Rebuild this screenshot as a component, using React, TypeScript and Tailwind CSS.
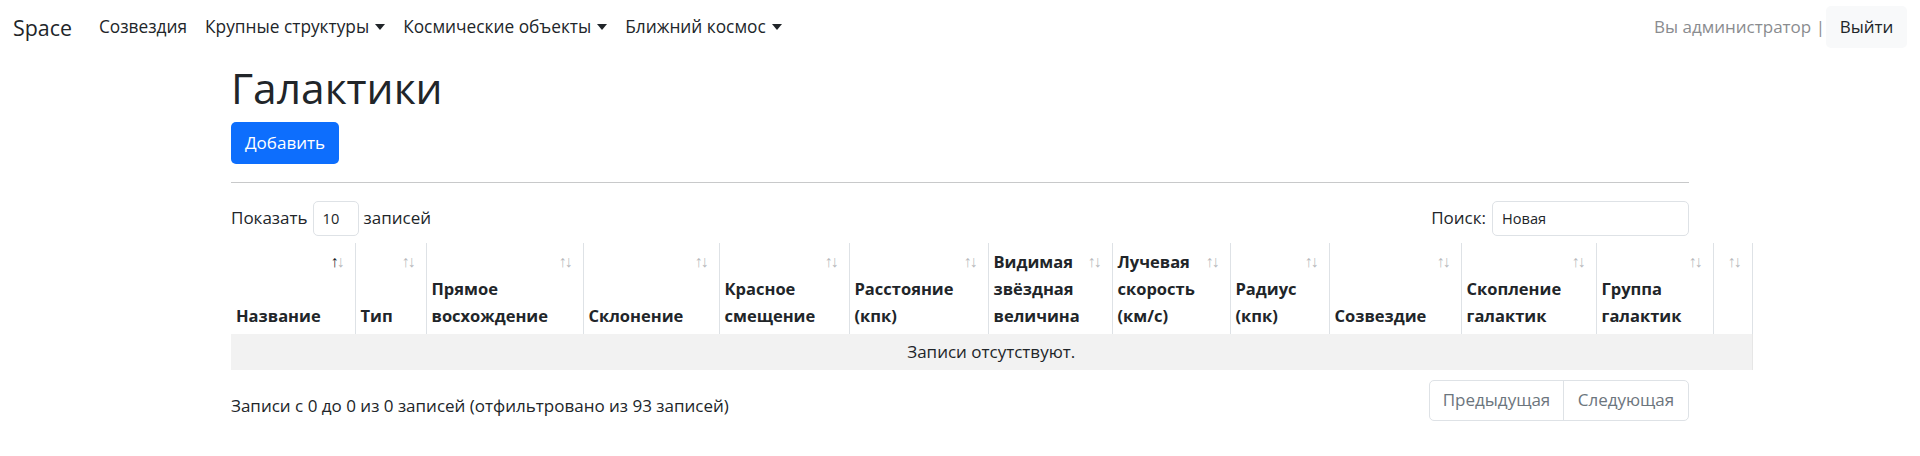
import React from "react";

const font = "font-['Open_Sans','Noto_Sans',sans-serif]";

type Col = { lines: string[]; cls: string; active?: boolean };

const cols: Col[] = [
  { lines: ["Название"], cls: "w-[124px]", active: true },
  { lines: ["Тип"], cls: "w-[71px]" },
  { lines: ["Прямое", "восхождение"], cls: "w-[157px]" },
  { lines: ["Склонение"], cls: "w-[136px]" },
  { lines: ["Красное", "смещение"], cls: "w-[130px]" },
  { lines: ["Расстояние", "(кпк)"], cls: "w-[139px]" },
  { lines: ["Видимая", "звёздная", "величина"], cls: "w-[124px]" },
  { lines: ["Лучевая", "скорость", "(км/с)"], cls: "w-[118px]" },
  { lines: ["Радиус", "(кпк)"], cls: "w-[99px]" },
  { lines: ["Созвездие"], cls: "w-[132px]" },
  { lines: ["Скопление", "галактик"], cls: "w-[135px]" },
  { lines: ["Группа", "галактик"], cls: "w-[117px]" },
  { lines: [], cls: "w-[39px]" },
];

function Caret() {
  return (
    <span className="ml-[6px] inline-block h-0 w-0 border-x-[5px] border-t-[6px] border-x-transparent border-t-[#212529] align-[3px]" />
  );
}

function SortIcon({ active }: { active?: boolean }) {
  return (
    <span className="absolute right-[10px] top-[7px] flex text-[16px] leading-[22px] font-normal">
      <span className={active ? "text-[#212529]" : "text-[#b8babd]"}>↑</span>
      <span className="-ml-[2px] text-[#b8babd]">↓</span>
    </span>
  );
}

export default function App() {
  return (
    <div className={`${font} min-h-screen bg-white text-[17px] leading-[26.4px] text-[#212529]`}>
      {/* navbar */}
      <nav className="flex h-[54px] items-center justify-between px-[13px]">
        <div className="flex items-center text-[17.3px]">
          <span className="mr-[18px] text-[21.4px] leading-[33px]">Space</span>
          <a className="px-[9px] py-[8px]">Созвездия</a>
          <a className="px-[9px] py-[8px]">
            Крупные структуры
            <Caret />
          </a>
          <a className="px-[9px] py-[8px]">
            Космические объекты
            <Caret />
          </a>
          <a className="px-[9px] py-[8px]">
            Ближний космос
            <Caret />
          </a>
        </div>
        <div className="flex items-center">
          <span className="text-[#8a8c8f]">Вы администратор |</span>
          <button className="ml-[1px] h-[42px] w-[81px] rounded-[5px] bg-[#f8f9fa] text-[#212529]">Выйти</button>
        </div>
      </nav>

      <main className="mx-auto w-[1458px]">
        <h1 className="mt-[8px] text-[42.5px] leading-[52px] font-medium">Галактики</h1>
        <button className="mt-[8px] h-[42px] w-[108px] rounded-[5px] bg-[#0d6efd] text-white">Добавить</button>
        <hr className="mt-[18px] border-t border-[#c8c9ca]" />

        {/* length + search */}
        <div className="mt-[18px] flex items-center justify-between">
          <div className="flex items-center">
            <span>Показать</span>
            <span className="mx-[5px] flex h-[35px] w-[46px] items-center rounded-[5px] border border-[#dee2e6] pl-[9px] text-[14.6px]">10</span>
            <span>записей</span>
          </div>
          <div className="flex items-center">
            <span className="mr-[6px]">Поиск:</span>
            <span className="flex h-[35px] w-[197px] items-center rounded-[5px] border border-[#dee2e6] pl-[9px] text-[14.6px]">Новая</span>
          </div>
        </div>

        {/* table */}
        <table className="mt-[7px] w-[1521px] max-w-none table-fixed border-collapse">
          <thead>
            <tr>
              {cols.map((c, i) => (
                <th
                  key={i}
                  className={`${c.cls} relative border-r border-[#dee2e6] px-[5px] pt-[5px] pb-[5px] text-left align-bottom text-[16.5px] leading-[27px] font-bold`}
                >
                  {c.lines.map((l, j) => (
                    <div key={j} className="whitespace-nowrap">{l}</div>
                  ))}
                  {c.lines.length === 0 && <div className="h-[81px]" />}
                  <SortIcon active={c.active} />
                </th>
              ))}
            </tr>
          </thead>
          <tbody>
            <tr className="bg-[#f2f2f2]">
              <td colSpan={13} className="h-[36px] border-r border-[#e6e6e6] text-center">
                Записи отсутствуют.
              </td>
            </tr>
          </tbody>
        </table>

        {/* info + pagination */}
        <div className="mt-[10px] flex items-center justify-between">
          <span className="mt-[12px]">Записи с 0 до 0 из 0 записей (отфильтровано из 93 записей)</span>
          <div className="flex h-[41px] overflow-hidden rounded-[5px] border border-[#dee2e6] text-[#6c757d]">
            <span className="flex w-[134px] items-center justify-center border-r border-[#dee2e6]">Предыдущая</span>
            <span className="flex w-[124px] items-center justify-center">Следующая</span>
          </div>
        </div>
      </main>
    </div>
  );
}
